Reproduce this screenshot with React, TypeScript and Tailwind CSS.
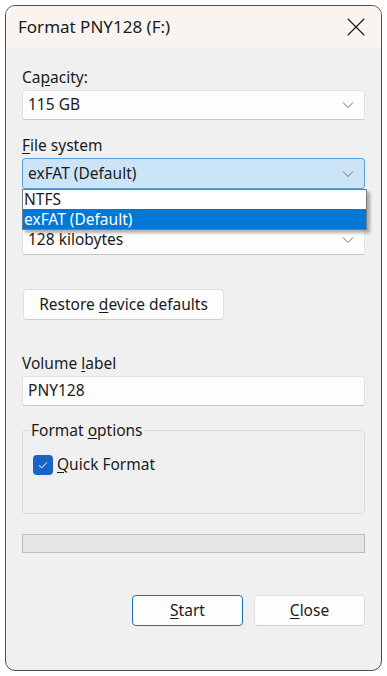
import { X } from "lucide-react";

const font = { fontFamily: '"Noto Sans", "Segoe UI", sans-serif' };

function Chevron() {
  return (
    <svg width="12" height="8" viewBox="0 0 12 8" className="shrink-0">
      <path d="M1 1.5 L6 6.5 L11 1.5" fill="none" stroke="#6e6e6e" strokeWidth="1" />
    </svg>
  );
}

function Combo({ value, active = false }: { value: string; active?: boolean }) {
  return (
    <div
      className={
        active
          ? "flex items-center justify-between h-[31px] pl-[5px] pr-[10px] rounded-[3px] border border-[#5aa0e0] bg-[#cce4f7]"
          : "flex items-center justify-between h-[30px] pl-[5px] pr-[10px] rounded-[3px] border border-[#e3e3e3] border-b-[#c8c8c8] bg-[#fdfdfd]"
      }
    >
      <span className="text-[15.5px] text-[#1b1b1b]">{value}</span>
      <Chevron />
    </div>
  );
}

function Button({ children, primary = false, className = "" }: { children: React.ReactNode; primary?: boolean; className?: string }) {
  return (
    <div
      className={
        "flex items-center justify-center h-[31px] rounded-[4px] bg-[#fdfdfd] text-[15.5px] text-[#1b1b1b] " +
        (primary ? "border border-[#1b6fc2]" : "border border-[#e0e0e0] border-b-[#cfcfcf]") +
        " " +
        className
      }
    >
      {children}
    </div>
  );
}

export default function App() {
  return (
    <div className="w-[387px] h-[676px] bg-white pl-[5px] pt-[5px]" style={font}>
      <div className="w-[377px] h-[666px] rounded-[10px] border border-[#4d4d4d] overflow-hidden bg-[#f0f0f0] flex flex-col">
        <div className="h-[42px] shrink-0 bg-[#f9f4ef] flex items-center justify-between pl-[12px] pr-[9px]">
          <span className="text-[17px] text-[#1b1b1b]">Format PNY128 (F:)</span>
          <X size={32} strokeWidth={0.8} color="#1b1b1b" />
        </div>

        <div className="flex flex-col px-[16px] pt-[16px]">
          <div className="h-[26px] text-[15.5px] text-[#1b1b1b] leading-[26px]">
            Ca<u className="underline-offset-2">p</u>acity:
          </div>
          <Combo value="115 GB" />

          <div className="mt-[12px] h-[26px] text-[15.5px] text-[#1b1b1b] leading-[26px]">
            <u className="underline-offset-2">F</u>ile system
          </div>
          <div className="relative">
            <Combo value="exFAT (Default)" active />
            <div className="absolute left-0 top-[31px] w-[345px] z-10 bg-white border border-[#7a7a7a] shadow-[3px_3px_3px_rgba(0,0,0,0.3)] text-[15.5px]">
              <div className="h-[19px] pl-[1px] text-[#1b1b1b] leading-[19px]">NTFS</div>
              <div className="h-[20px] pl-[1px] bg-[#0078d7] text-white leading-[20px]">exFAT (Default)</div>
            </div>
          </div>

          <div className="mt-[10px] h-[26px]" />
          <Combo value="128 kilobytes" />

          <Button className="mt-[34px] w-[201px] ml-[1px]">
            Restore&nbsp;<u className="underline-offset-2">d</u>evice defaults
          </Button>

          <div className="mt-[30px] h-[26px] text-[15.5px] text-[#1b1b1b] leading-[26px]">
            Volume <u className="underline-offset-2">l</u>abel
          </div>
          <div className="h-[30px] flex items-center pl-[5px] rounded-[3px] border border-[#e3e3e3] border-b-[#c8c8c8] bg-[#fdfdfd] text-[15.5px] text-[#1b1b1b]">
            PNY128
          </div>

          <div className="relative mt-[24px] h-[84px] rounded-[3px] border border-[#dcdcdc]">
            <div className="absolute left-[7px] top-[-11px] px-[1px] bg-[#f0f0f0] text-[15.5px] leading-[20px] text-[#1b1b1b]">
              Format <u className="underline-offset-2">o</u>ptions
            </div>
            <div className="flex items-center gap-[4px] pl-[10px] pt-[22px]">
              <div className="w-[20px] h-[20px] rounded-[4px] bg-[#1b63c6] flex items-center justify-center">
                <svg width="10" height="8" viewBox="0 0 10 8">
                  <path d="M1 4.2 L3.8 6.8 L9 1.2" fill="none" stroke="white" strokeWidth="1" />
                </svg>
              </div>
              <span className="text-[15.5px] text-[#1b1b1b]">
                <u className="underline-offset-2">Q</u>uick Format
              </span>
            </div>
          </div>

          <div className="mt-[20px] h-[19px] border border-[#bcbcbc] bg-[#e6e6e6]" />

          <div className="mt-[42px] flex justify-end gap-[11px]">
            <Button primary className="w-[111px]">
              <u className="underline-offset-2">S</u>tart
            </Button>
            <Button className="w-[111px]">
              <u className="underline-offset-2">C</u>lose
            </Button>
          </div>
        </div>
      </div>
    </div>
  );
}
